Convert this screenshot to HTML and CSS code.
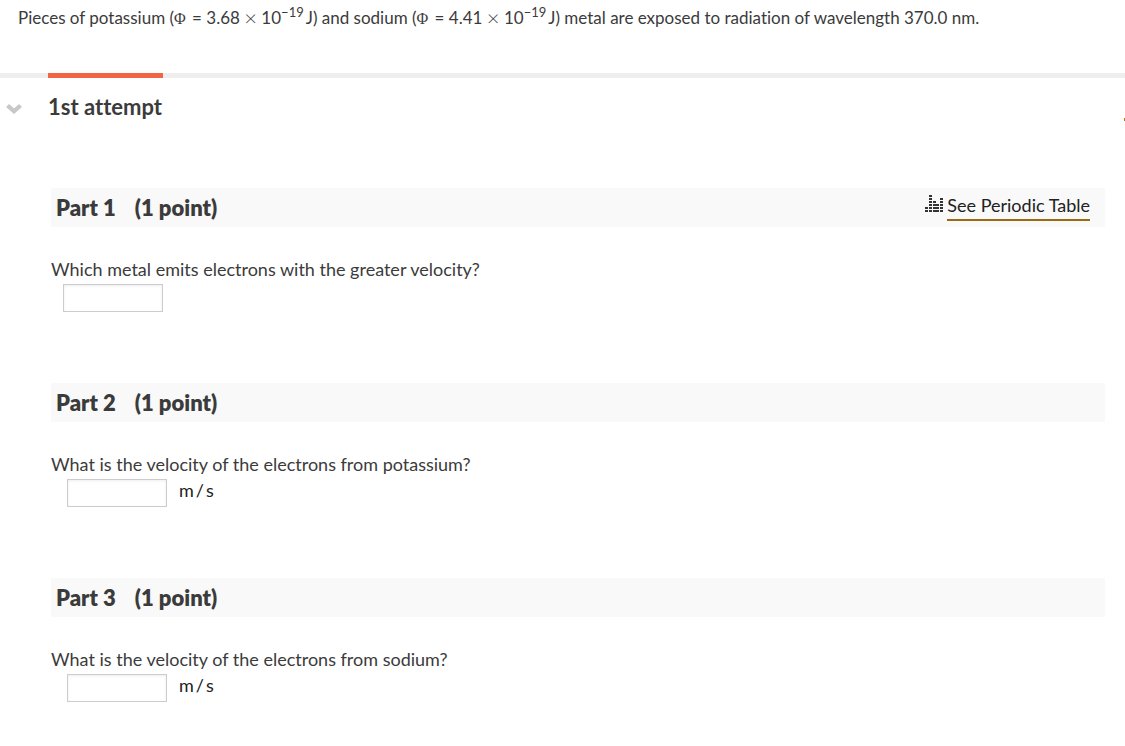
FILE: index.html
```html
<!DOCTYPE html>
<html lang="en">
<head>
  <meta charset="UTF-8">
  <meta name="viewport" content="width=device-width, initial-scale=1.0">
  <title>1st attempt</title>
  <link rel="stylesheet" href="styles.css">
</head>
<body>
  <p class="prompt">Pieces of potassium (<span class="phi">Φ</span> = 3.68 <span class="times">×</span> 10<sup>−19</sup>J) and sodium (<span class="phi">Φ</span> = 4.41 <span class="times">×</span> 10<sup>−19</sup>J) metal are exposed to radiation of wavelength 370.0 nm.</p>

  <div class="progress"><div class="progress-done"></div></div>

  <header class="attempt">
    <button class="toggle" type="button" aria-label="Collapse attempt">
      <svg width="16" height="10" viewBox="0 0 16 10"><path d="M0 3L3 0L8 4.5L13 0L16 3L8 10Z" fill="#c8c8c8"/></svg>
    </button>
    <h1>1st attempt</h1>
    <span class="edge-mark"></span>
  </header>

  <main class="parts">
    <section class="part">
      <div class="part-header">
        <h2>Part 1 <span class="points">(1 point)</span></h2>
        <div class="periodic">
          <svg width="18" height="17" viewBox="0 0 18 17" fill="#333" shape-rendering="crispEdges">
            <path d="M0 12h3v2H0zM0 15h3v2H0z"/>
            <path d="M4 0h3v2H4zM4 3h3v2H4zM4 6h3v2H4zM4 9h3v2H4zM4 12h3v2H4zM4 15h3v2H4z"/>
            <path d="M8 6h3v2H8zM8 9h3v2H8zM8 12h3v2H8zM8 15h3v2H8z"/>
            <path d="M11 9h3v2h-3zM11 12h3v2h-3zM11 15h3v2h-3z"/>
            <path d="M15 3h3v2h-3zM15 6h3v2h-3zM15 9h3v2h-3zM15 12h3v2h-3zM15 15h3v2h-3z"/>
          </svg>
          <a href="#">See Periodic Table</a>
        </div>
      </div>
      <label class="question" for="answer1">Which metal emits electrons with the greater velocity?</label>
      <div class="answer">
        <input type="text" id="answer1">
      </div>
    </section>

    <section class="part">
      <div class="part-header">
        <h2>Part 2 <span class="points">(1 point)</span></h2>
      </div>
      <label class="question" for="answer2">What is the velocity of the electrons from potassium?</label>
      <div class="answer with-unit">
        <input type="text" id="answer2">
        <span class="unit">m<span class="slash">/</span>s</span>
      </div>
    </section>

    <section class="part">
      <div class="part-header">
        <h2>Part 3 <span class="points">(1 point)</span></h2>
      </div>
      <label class="question" for="answer3">What is the velocity of the electrons from sodium?</label>
      <div class="answer with-unit">
        <input type="text" id="answer3">
        <span class="unit">m<span class="slash">/</span>s</span>
      </div>
    </section>
  </main>
</body>
</html>
```
FILE: styles.css
```css
* {
  box-sizing: border-box;
}

body {
  margin: 0;
  font-family: Lato, sans-serif;
  font-size: 18px;
  font-variant-ligatures: none;
  line-height: 24px;
  color: #3b3b3b;
  background-color: #fff;
}

.prompt {
  margin: 0;
  padding: 6px 18px 43px;
  font-size: 17px;
}

.prompt sup {
  margin-right: 2px;
  font-size: 13px;
  line-height: 0;
  vertical-align: 7px;
}

.phi {
  margin-right: 2px;
  font-family: "Liberation Serif", serif;
  font-size: 16px;
  line-height: 0;
}

.times {
  font-size: 22px;
  font-weight: 300;
  line-height: 0;
  vertical-align: -2px;
}

.progress {
  height: 5px;
  padding-left: 48px;
  background-color: #eee;
}

.progress-done {
  width: 115px;
  height: 5px;
  background-color: #f06543;
}

.attempt {
  display: flex;
  align-items: center;
  height: 58px;
}

.toggle {
  display: flex;
  width: 48px;
  padding: 4px 6px 0;
  border: none;
  background: none;
  cursor: pointer;
}

h1 {
  margin: 0;
  font-size: 22px;
  font-weight: 700;
}

.edge-mark {
  width: 1px;
  height: 3px;
  margin: 24px 0 0 auto;
  background-color: #b5742d;
}

.parts {
  padding: 52px 20px 0 51px;
}

.part {
  margin-bottom: 71px;
}

.part-header {
  display: flex;
  justify-content: space-between;
  align-items: center;
  height: 39px;
  margin-bottom: 29px;
  padding: 0 15px 0 5px;
  background-color: #f9f9f9;
}

h2 {
  margin: 0;
  font-size: 22px;
  font-weight: 800;
}

.points {
  margin-left: 14px;
}

.periodic {
  display: flex;
  align-items: center;
  gap: 4px;
}

.periodic svg {
  margin-bottom: 8px;
}

.periodic a {
  margin-bottom: 2px;
  padding-bottom: 2px;
  border-bottom: 2px solid #996b12;
  color: #222;
  text-decoration: none;
}

.question {
  display: block;
  padding-bottom: 2px;
  line-height: 26px;
}

.answer {
  display: flex;
  gap: 12px;
  padding-left: 12px;
}

.with-unit {
  padding-left: 16px;
}

.answer input {
  width: 100px;
  height: 28px;
  border: 1px solid #ccc;
  background-color: #fff;
  box-shadow: inset 0 1px 3px #eee;
}

.unit {
  line-height: 22px;
  color: #222;
}

.slash {
  margin: 0 2px;
}
```
